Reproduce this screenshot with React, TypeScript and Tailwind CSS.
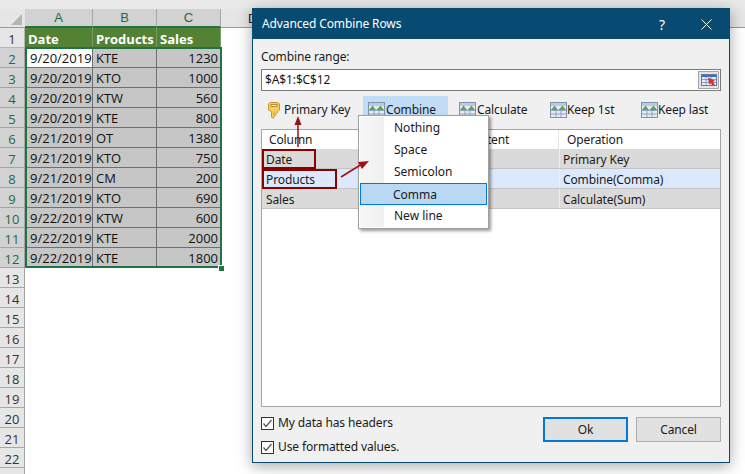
const dataRows = [
  ["9/20/2019", "KTE", "1230"],
  ["9/20/2019", "KTO", "1000"],
  ["9/20/2019", "KTW", "560"],
  ["9/20/2019", "KTE", "800"],
  ["9/21/2019", "OT", "1380"],
  ["9/21/2019", "KTO", "750"],
  ["9/21/2019", "CM", "200"],
  ["9/21/2019", "KTO", "690"],
  ["9/22/2019", "KTW", "600"],
  ["9/22/2019", "KTE", "2000"],
  ["9/22/2019", "KTE", "1800"],
];
const emptyRows = [13, 14, 15, 16, 17, 18, 19, 20, 21, 22];

function TableIcon() {
  return (
    <svg width="17" height="16" viewBox="0 0 17 16" className="shrink-0">
      <rect x="0.5" y="0.5" width="16" height="15" fill="#e4ecf7" stroke="#7f93ad" />
      <rect x="1" y="1" width="15" height="3" fill="#b9cbe3" />
      <path d="M1 8 L4.5 3.5 L8 8 Z M8.500 8 L12.500 3.500 L16 8 Z" fill="#5fa35a" />
      <path d="M1 8.500H16M1 12H16M6 8V15M11 8V15" stroke="#8fa3bd" fill="none" />
    </svg>
  );
}

function KeyIcon() {
  return (
    <svg width="12" height="17" viewBox="0 0 12 17" className="shrink-0">
      <path d="M2 0.500H10L11.500 2V8L9.500 9.500V10.500L8 11.500V12.500L6.500 14L5 16.500L3.500 15V9.500L0.500 8V2Z" fill="#f7cf5e" stroke="#c9982c" />
      <rect x="3" y="2.500" width="6" height="2" fill="#fff6cf" stroke="#a67c1d" strokeWidth="0.800" />
      <path d="M6 9.500V13.500" stroke="#c9982c" />
    </svg>
  );
}

function ToolButton({ label, icon, active, gap, w }: { label: string; icon: React.ReactNode; active?: boolean; gap: string; w: string }) {
  return (
    <div className={`flex h-full items-center ${gap} ${w} ${active ? "bg-[#c0dcf7]" : ""}`}>
      {icon}
      <span>{label}</span>
    </div>
  );
}

function Check({ label }: { label: string }) {
  return (
    <div className="flex h-6 items-center gap-[4px]">
      <div className="flex h-[13px] w-[13px] items-center justify-center border border-[#333] bg-white">
        <svg width="11" height="11" viewBox="0 0 11 11">
          <path d="M1.500 5.500L4 8.500L9.500 2" stroke="#555" strokeWidth="1.200" fill="none" />
        </svg>
      </div>
      <span>{label}</span>
    </div>
  );
}

const menuItems = ["Nothing", "Space", "Semicolon", "Comma", "New line"];

export default function App() {
  return (
    <div className="relative h-[474px] w-[745px] overflow-hidden bg-white font-['Noto_Sans',sans-serif] text-[12px] text-[#1a1a1a]">
      {/* Sheet */}
      <div className="h-[9px] bg-[#e9e9e9]" />
      <div className="flex h-[19px] border-b border-[#9a9a9a] bg-[#e6e6e6]">
        <div className="relative w-[25px] shrink-0 bg-[#e6e6e6]">
          <div className="absolute bottom-[2px] right-[3px] h-0 w-0 border-b-[11px] border-l-[11px] border-b-[#b5b5b5] border-l-transparent" />
        </div>
        {[["A", "w-[68px]"], ["B", "w-[64px]"], ["C", "w-[64px]"]].map(([c, w]) => (
          <div key={c} className={`flex ${w} h-[19px] items-center justify-center border-r border-b-2 border-r-[#a8a8a8] border-b-[#217346] bg-[#d2d2d2] font-['Liberation_Sans',sans-serif] text-[13px] text-[#1d6b43]`}>
            {c}
          </div>
        ))}
        <div className="ml-[27px] font-['Liberation_Sans',sans-serif] text-[13px] text-[#600000]">D</div>
      </div>
      <div className="relative font-['Open_Sans',sans-serif] text-[13px] leading-[19px] text-[#111]">
        <div className="flex h-5">
          <div className="w-[25px] border-b border-r border-[#b5b5b5] bg-[#e6e6e6] pt-[2px] text-center text-[#333]">1</div>
          {[["Date", "w-[68px]"], ["Products", "w-[64px]"], ["Sales", "w-[64px]"]].map(([t, w]) => (
            <div key={t} className={`${w} border-r border-[#7b9c68] bg-[#548235] pl-[3px] pt-[2px] font-bold text-white`}>
              {t}
            </div>
          ))}
        </div>
        {dataRows.map((r, i) => (
          <div key={i} className="flex h-5 leading-[21px]">
            <div className="w-[25px] border-b border-r border-[#a5a5a5] bg-[#d2d2d2] pt-[1px] text-center text-[#1d6b43]">{i + 2}</div>
            <div className={`w-[68px] border-r border-b border-[#6e6e6e] pl-[5px] ${i === 0 ? "bg-white" : "bg-[#c6c6c6]"}`}>{r[0]}</div>
            <div className="w-[64px] border-r border-b border-[#6e6e6e] bg-[#c6c6c6] pl-[3px]">{r[1]}</div>
            <div className="w-[64px] border-b border-[#6e6e6e] bg-[#c6c6c6] pr-[3px] text-right">{r[2]}</div>
          </div>
        ))}
        {emptyRows.map((n) => (
          <div key={n} className="flex h-5 leading-[21px]">
            <div className="w-[25px] border-b border-r border-[#a5a5a5] bg-[#e6e6e6] pt-[1px] text-center text-[#333]">{n}</div>
          </div>
        ))}
        <div className="flex h-5">
          <div className="w-[25px] border-r border-[#a5a5a5] bg-[#e6e6e6]" />
        </div>
        {/* Selection */}
        <div className="absolute left-[25px] top-[19px] h-[221px] w-[197px] border-2 border-[#217346]" />
        <div className="absolute left-[218px] top-[237px] box-content h-[5px] w-[5px] border border-white bg-[#217346]" />
      </div>

      {/* Dialog */}
      <div className="absolute left-[252px] top-[8px] flex h-[455px] w-[478px] flex-col border border-[#074a72] bg-[#f0f0f0] tracking-[-0.12px] shadow-[0_3px_14px_rgba(0,0,0,0.35)]">
        <div className="flex h-[30px] shrink-0 items-center justify-between bg-[#074a72] pl-[9px] pr-[17px] text-white">
          <span>Advanced Combine Rows</span>
          <div className="flex items-center gap-[36px]">
            <span className="text-[14px]">?</span>
            <svg width="11" height="11" viewBox="0 0 11 11">
              <path d="M0.500 0.500L10.500 10.500M10.500 0.500L0.500 10.500" stroke="#fff" strokeWidth="1" />
            </svg>
          </div>
        </div>
        <div className="flex flex-1 flex-col px-2">
          <div className="mt-[9px] h-[18px] leading-[18px]">Combine range:</div>
          <div className="mt-[3px] flex h-[22px] items-center justify-between border border-[#7a7a7a] bg-white pl-[3px] pr-[1px]">
            <span>$A$1:$C$12</span>
            <div className="flex h-[18px] w-[21px] items-center justify-center border border-[#a5a5a5] bg-[#e4e4e4]">
              <svg width="16" height="12" viewBox="0 0 16 12">
                <rect x="0.500" y="0.500" width="15" height="11" fill="#e6eefa" stroke="#5b7fb5" />
                <path d="M1 2H15" stroke="#3f6fb5" strokeWidth="2" />
                <path d="M1 5.500H15M1 8.500H15M5 3V11M10 3V11" stroke="#7f9fd0" />
                <path d="M7 3.500L14 6.500L12 8L14 11L11.500 11.500L10 9L8 10.500Z" fill="#d8322a" />
              </svg>
            </div>
          </div>
          <div className="mt-[5px] flex h-[28px]">
            <ToolButton label="Primary Key" icon={<KeyIcon />} gap="gap-[4px] pl-[7px]" w="w-[102px]" />
            <ToolButton label="Combine" icon={<TableIcon />} gap="gap-px pl-[5px]" active w="w-[85px]" />
            <ToolButton label="Calculate" icon={<TableIcon />} gap="gap-px pl-[11px]" w="w-[102px]" />
            <ToolButton label="Keep 1st" icon={<TableIcon />} gap="gap-0" w="w-[91px]" />
            <ToolButton label="Keep last" icon={<TableIcon />} gap="gap-0" w="w-[80px]" />
          </div>
          <div className="mt-[5px] flex h-[278px] flex-col border border-[#a5a5a5] bg-white">
            <div className="flex h-[19px] leading-[19px]">
              <div className="w-[100px] border-r border-[#e5e5e5] pl-[7px]">Column</div>
              <div className="w-[197px] border-r border-[#e5e5e5] pl-[103px]">Content</div>
              <div className="pl-2">Operation</div>
            </div>
            {[["Date", "Primary Key", "bg-[#dadada]"], ["Products", "Combine(Comma)", "bg-[#dce8fb]"], ["Sales", "Calculate(Sum)", "bg-[#dadada]"]].map(([a, b, bg]) => (
              <div key={a} className={`flex h-5 border-b border-[#c4c4c4] leading-[21px] ${bg}`}>
                <div className="w-[297px] pl-[4px]">{a}</div>
                <div className="border-l border-[#efefef] pl-[3px]">{b}</div>
              </div>
            ))}
          </div>
          <div className="mt-[4px] flex items-start justify-between">
            <div>
              <Check label="My data has headers" />
              <Check label="Use formatted values." />
            </div>
            <div className="mt-[6px] flex gap-[8px]">
              <div className="flex h-[25px] w-[85px] items-center justify-center border-2 border-[#0078d7] bg-[#e1e1e1]">Ok</div>
              <div className="flex h-[25px] w-[85px] items-center justify-center border border-[#adadad] bg-[#e1e1e1]">Cancel</div>
            </div>
          </div>
        </div>
      </div>

      {/* Dropdown menu */}
      <div className="absolute left-[358px] top-[115px] h-[114px] w-[131px] border border-[#a0a0a0] bg-white p-px shadow-[2px_2px_3px_rgba(0,0,0,0.4)]">
        <div className="absolute bottom-px left-px top-px w-[24px] bg-gradient-to-r from-[#f6f6f6] to-[#f0f0f0]" />
        <div className="relative flex flex-col">
          {menuItems.map((m) => (
            <div key={m} className={`h-[22px] leading-[21px] ${m === "Comma" ? "border border-[#0078d7] bg-[#b8d8f4] pl-[32px]" : "pl-[34px]"}`}>
              {m}
            </div>
          ))}
        </div>
      </div>

      {/* Callout boxes */}
      <div className="absolute left-[262px] top-[149px] h-[20px] w-[54px] border-[2px] border-[#8b0000]" />
      <div className="absolute left-[262px] top-[169px] h-[20px] w-[75px] border-[2px] border-[#8b0000]" />
      <svg className="absolute left-0 top-0" width="745" height="474" viewBox="0 0 745 474">
        <path d="M298 147V122" stroke="#a01010" strokeWidth="1.500" />
        <path d="M298 116L294.500 125H301.500Z" fill="#a01010" />
        <path d="M341 177L362 164" stroke="#a01010" strokeWidth="1.500" />
        <path d="M369 161L358 162L362 169Z" fill="#a01010" />
      </svg>
    </div>
  );
}
